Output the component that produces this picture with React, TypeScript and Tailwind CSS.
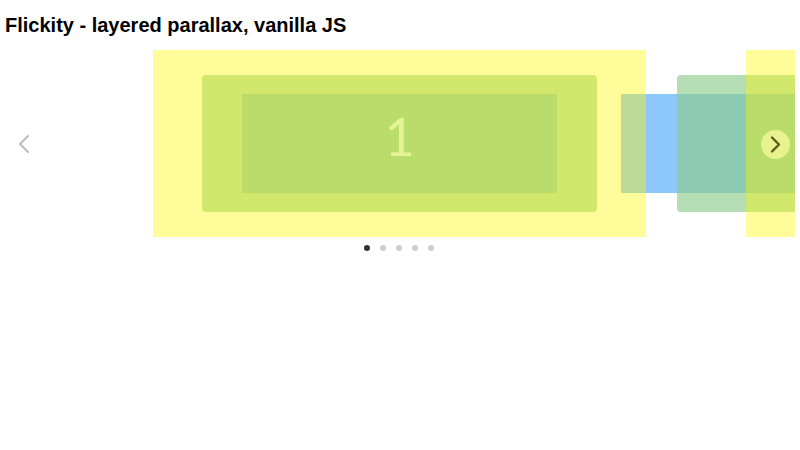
import React from "react";

export default function App() {
  const dots = [0, 1, 2, 3, 4];
  return (
    <div className="w-[800px] h-[450px] bg-white overflow-hidden font-['Liberation_Sans',Arial,sans-serif]">
      <h1 className="pt-[13px] pl-[5px] text-[20px] leading-[24px] font-bold text-black">
        Flickity - layered parallax, vanilla JS
      </h1>
      <div className="relative mt-[13px] h-[187px] w-[795px] overflow-hidden">
        {/* back layer (blue) */}
        <div className="absolute inset-0 flex items-center pl-[242px] gap-[64px]">
          {dots.map((i) => (
            <div key={i} className="shrink-0 w-[315px] h-[99px] bg-[rgb(142,200,251)]" />
          ))}
        </div>
        {/* middle layer (green) */}
        <div className="absolute inset-0 flex items-center pl-[202px] gap-[80px]">
          {dots.map((i) => (
            <div key={i} className="shrink-0 w-[395px] h-[137px] rounded-[4px] bg-[rgba(139,203,138,0.64)]" />
          ))}
        </div>
        {/* front layer (yellow) */}
        <div className="absolute inset-0 flex items-center pl-[153px] gap-[100px]">
          {dots.map((i) => (
            <div key={i} className="shrink-0 w-[493px] h-[187px] bg-[rgba(255,247,0,0.4)] flex items-center justify-center">
              {i === 0 && (
                <span className="font-['Lato','DejaVu_Sans',sans-serif] font-normal text-[52px] leading-none text-[#e6f296] mt-[-15px]">
                  1
                </span>
              )}
            </div>
          ))}
        </div>
        {/* prev button */}
        <div className="absolute left-[10px] top-[80px] w-[28px] h-[28px] flex items-center justify-center">
          <svg width="28" height="28" viewBox="0 0 28 28">
            <polyline points="18,6 10,14 18,22" fill="none" stroke="#bcbcbc" strokeWidth="2" strokeLinecap="round" strokeLinejoin="round" />
          </svg>
        </div>
        {/* next button */}
        <div className="absolute left-[761px] top-[80px] w-[29px] h-[29px] rounded-full bg-[#e8f28e] flex items-center justify-center">
          <svg width="29" height="29" viewBox="0 0 29 29">
            <polyline points="11,7.5 18,14.5 11,21.5" fill="none" stroke="#5b5b1c" strokeWidth="2.4" strokeLinecap="round" strokeLinejoin="round" />
          </svg>
        </div>
      </div>
      <div className="flex justify-center gap-[10px] mt-[8px] pr-[2px]">
        {dots.map((i) => (
          <div key={i} className={"w-[6px] h-[6px] rounded-full " + (i === 0 ? "bg-[#333333]" : "bg-[#cccccc]")} />
        ))}
      </div>
    </div>
  );
}
